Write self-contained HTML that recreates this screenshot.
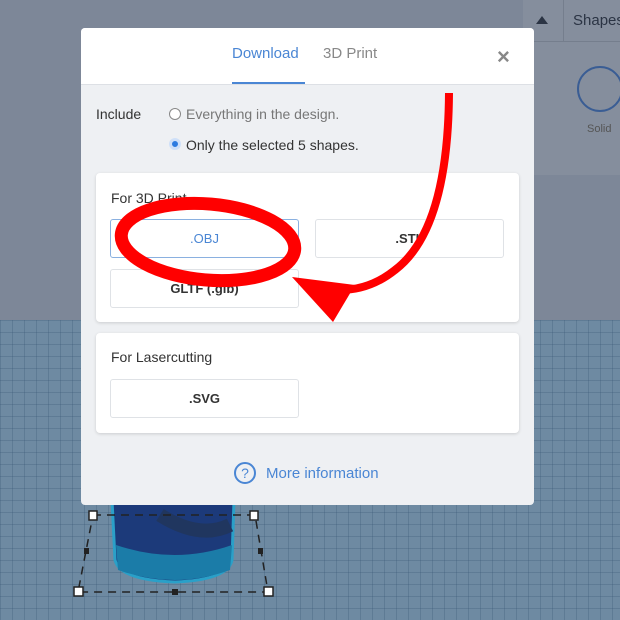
<!DOCTYPE html>
<html><head><style>
*{margin:0;padding:0;box-sizing:border-box}
body{width:620px;height:620px;overflow:hidden;position:relative;font-family:"Liberation Sans",sans-serif;background:#7d8798}
.grid{position:absolute;left:0;top:320px;width:620px;height:300px;background-color:#6e8aa2;
background-image:linear-gradient(rgba(50,80,110,.25) 1px,transparent 1px),linear-gradient(90deg,rgba(50,80,110,.25) 1px,transparent 1px);background-size:12px 12px}
.panel{position:absolute;left:523px;top:0;width:97px;height:175px;background:#858e9d}
.panel .hd{height:42px;border-bottom:1px solid #757e8d;position:relative}
.modal{position:absolute;left:81px;top:28px;width:453px;height:477px;background:#eef0f3;border-radius:4px;overflow:hidden}
.head{height:57px;background:#fff;border-bottom:1px solid #dde0e5;position:relative}
.tab{position:absolute;top:17px;font-size:15px}
.card{position:absolute;left:15px;width:423px;background:#fff;border-radius:4px;box-shadow:0 1px 3px rgba(0,0,0,.15)}
.btn{position:absolute;width:189px;height:39px;border:1px solid #dfe2e6;border-radius:3px;text-align:center;line-height:38px;font-size:13px;font-weight:bold;color:#333}
.lbl{position:absolute;left:15px;font-size:14px;color:#333}
.rad{position:absolute;width:12px;height:12px;border-radius:50%;border:1px solid #888;background:#fff}
</style></head><body>
<div class="panel"><div class="hd"><div style="position:absolute;left:13px;top:16px;width:0;height:0;border-left:6px solid transparent;border-right:6px solid transparent;border-bottom:8px solid #2b3444"></div><div style="position:absolute;left:40px;top:0;height:42px;border-left:1px solid #757e8d"></div><div style="position:absolute;left:50px;top:12px;font-size:15px;color:#2b3444">Shapes</div></div>
<div style="position:absolute;left:54px;top:66px;width:46px;height:46px;border:2px solid #3a5d94;border-radius:50%"></div>
<div style="position:absolute;left:64px;top:123px;font-size:11px;color:#555">Solid</div></div>
<div class="grid"></div>
<svg style="position:absolute;left:0;top:0" width="620" height="620">
<path d="M112 500 L115 560 Q120 580 175 582 Q228 580 232 560 L234 500 Z" fill="#1c3a7a" stroke="#2aa0c8" stroke-width="3"/>
<path d="M116 545 Q175 565 232 545 L230 570 Q175 590 118 570Z" fill="#1b7ca8"/>
<path d="M160 515 Q200 540 230 525" stroke="#20365f" stroke-width="14" fill="none"/>
<g stroke="#222" stroke-width="1.5" fill="none" stroke-dasharray="8 6"><path d="M93 515 L255 515 L268 592 L78 592 Z"/></g>
<g fill="#fff" stroke="#222" stroke-width="1.5"><rect x="89" y="511" width="8" height="9"/><rect x="250" y="511" width="8" height="9"/><rect x="74" y="587" width="9" height="9"/><rect x="264" y="587" width="9" height="9"/></g>
<g fill="#222"><rect x="84" y="548" width="5" height="6"/><rect x="258" y="548" width="5" height="6"/><rect x="172" y="589" width="6" height="6"/></g>
</svg>
<div class="modal">
<div class="head">
<div class="tab" style="left:151px;color:#4a86d4">Download</div>
<div style="position:absolute;left:151px;top:54px;width:73px;height:2px;background:#4a86d4"></div>
<div class="tab" style="left:242px;color:#888">3D Print</div>
<div style="position:absolute;left:416px;top:16px;font-size:22px;color:#888;font-weight:bold">×</div>
</div>
<div class="lbl" style="top:78px;color:#333">Include</div>
<div class="rad" style="left:88px;top:80px"></div>
<div style="position:absolute;left:105px;top:78px;font-size:14px;color:#777">Everything in the design.</div>
<div class="rad" style="left:88px;top:110px;border:3px solid #cfe0f8;background:#2d7be0"></div>
<div style="position:absolute;left:105px;top:109px;font-size:14px;color:#333">Only the selected 5 shapes.</div>
<div class="card" style="top:145px;height:149px">
<div class="lbl" style="top:17px">For 3D Print</div>
<div class="btn" style="left:14px;top:46px;border-color:#8ab0e0;color:#4a86d4;font-weight:normal">.OBJ</div>
<div class="btn" style="left:219px;top:46px">.STL</div>
<div class="btn" style="left:14px;top:96px">GLTF (.glb)</div>
</div>
<div class="card" style="top:305px;height:100px">
<div class="lbl" style="top:16px">For Lasercutting</div>
<div class="btn" style="left:14px;top:46px">.SVG</div>
</div>
<div style="position:absolute;left:153px;top:434px;width:22px;height:22px;border:2px solid #4a86d4;border-radius:50%;color:#4a86d4;font-size:14px;text-align:center;line-height:19px">?</div>
<div style="position:absolute;left:185px;top:437px;font-size:15px;color:#4a86d4">More information</div>
</div>
<svg style="position:absolute;left:0;top:0" width="620" height="620">
<ellipse cx="208" cy="242" rx="87" ry="38" transform="rotate(5 208 242)" fill="none" stroke="#f00" stroke-width="13"/>
<path d="M449 93 Q448 230 395 270 Q370 290 340 290" fill="none" stroke="#f00" stroke-width="8"/>
<path d="M292 277 L355 285 L333 322 Z" fill="#f00"/>
</svg>
</body></html>
